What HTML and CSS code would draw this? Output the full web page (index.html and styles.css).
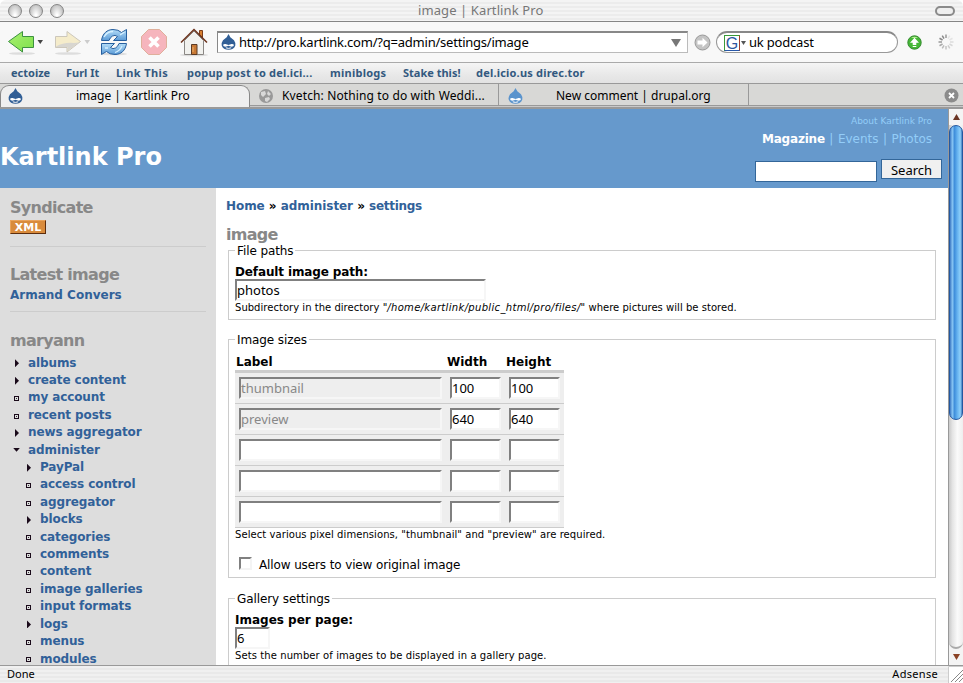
FILE: index.html
```
<!DOCTYPE html>
<html lang="en">
<head>
<meta charset="utf-8">
<title>image | Kartlink Pro</title>
<link rel="stylesheet" href="styles.css">
</head>
<body>
<svg width="0" height="0" class="defs">
  <defs>
    <linearGradient id="gGreen" x1="0" y1="0" x2="1" y2="1"><stop offset="0" stop-color="#a8f070"/><stop offset="1" stop-color="#7fe04c"/></linearGradient>
    <linearGradient id="gBlue" x1="0" y1="0" x2="0" y2="1"><stop offset="0" stop-color="#b4ddf8"/><stop offset="1" stop-color="#5a9ad6"/></linearGradient>
    <symbol id="drop" viewBox="0 0 15 16">
      <path d="M7.500 0L9.300 3.200L13 6.200Q15 9 14.300 11.500Q12.800 15.800 7.500 15.800T.7 11.500Q0 9 2 6.200L5.700 3.200Z" fill="currentColor"/>
      <path d="M2 11Q2.600 9.800 4.500 10L7.500 11L10.500 10Q12.400 9.800 13 11Q12.700 12.800 10.500 12.800L7.500 11.800L4.500 12.800Q2.300 12.800 2 11Z" fill="#fff"/>
      <path d="M4.800 13.800Q7.500 15 10.200 13.800" fill="none" stroke="#fff"/>
    </symbol>
  </defs>
</svg>
<div class="window">
  <header class="titlebar">
    <div class="lights"><i></i><i></i><i></i></div>
    <span class="title">image | Kartlink Pro</span>
    <i class="pill"></i>
  </header>

  <nav class="toolbar">
    <svg class="tools" width="210" height="40" viewBox="0 0 210 40">
      <g fill="#000" opacity=".1"><ellipse cx="22" cy="31.500" rx="13" ry="1.300"/><ellipse cx="68" cy="31.500" rx="13" ry="1.300"/><ellipse cx="114" cy="32" rx="13" ry="1.300"/><ellipse cx="194" cy="33" rx="14" ry="1.300"/></g>
      <path d="M8.500 19.500L22.500 9.500V14.500H33.500V25.500H22.500V30L8.500 19.500Z" fill="url(#gGreen)" stroke="#3c9140"/>
      <path d="M37.500 18h5.500l-2.750 4z" fill="#444"/>
      <path d="M80.500 19.500L67 9.500V14.500H55.500V25.500H67V30Z" fill="#f5eccb" stroke="#ccc7bb"/>
      <path d="M56 24.500Q64 20 74 21L79 20.500L67.500 29V25H56Z" fill="#d8d6d0"/>
      <path d="M84.500 18h5.500l-2.750 4z" fill="#ccc"/>
      <g fill="url(#gBlue)" stroke="#28609f" stroke-linejoin="round">
        <path d="M101.500 18.500C102.500 11.500 107 7.500 113 7.500Q118.500 7.500 121.500 10.500L126.500 7.500V18.500H113.500L117.500 14.500Q115 12.500 112.500 14Q110 15.500 109 18.500Z"/>
        <path d="M126.500 21.500C125.500 28.500 121 32.500 115 32.500Q109.500 32.500 106.500 29.500L101.500 32.500V21.500H114.500L110.500 25.500Q113 27.500 115.500 26Q118 24.500 119 21.500Z"/>
      </g>
      <path d="M104 15Q107 9.500 113 9.500M120 13L124.500 10M105 26h3M122 24Q120 29 115 30.500" fill="none" stroke="#d5f0ff" stroke-width="1.300"/>
      <path d="M148.500 7.500H159.500L166.500 14.500V25.500L159.500 32.500H148.500L141.500 25.500V14.500Z" fill="#f6b5bd" stroke="#dfaf9b"/>
      <path d="M149.500 15.500L158.500 24.500M158.500 15.500L149.500 24.500" stroke="#fff" stroke-width="3.600"/>
      <path d="M199.500 8.500h3V16l-3-3z" fill="#d98032" stroke="#7c3c18"/>
      <path d="M184.500 18.500L194 9L203.500 18.500V32.500H184.500Z" fill="#f1f1ee" stroke="#8a8784"/>
      <path d="M181 20.500L194 7.500L207 20.500" fill="none" stroke="#6c321b" stroke-width="1.500"/>
      <path d="M191.500 22.500h5.500V32.500h-5.500z" fill="#c87935" stroke="#5b3a23"/>
      <path d="M193 30v-5" stroke="#efb36b"/>
    </svg>
    <div class="address">
      <svg width="15" height="16" class="navy"><use href="#drop"/></svg>
      <span class="url">http://pro.kartlink.com/?q=admin/settings/image</span>
      <svg class="drop-arrow" width="10" height="8"><path d="M0 0H10L5 8Z" fill="#777"/></svg>
    </div>
    <svg class="go" width="17" height="17" viewBox="0 0 17 17"><circle cx="8.500" cy="8.500" r="7.500" fill="#c4c4c4" stroke="#999"/><path d="M3.500 6.500H8.500V3.800L13.500 8.500L8.500 13.200V10.500H3.500Z" fill="#fff"/></svg>
    <div class="searchbox">
      <span class="g-icon">G</span>
      <svg width="5" height="4"><path d="M0 0H5L2.500 4Z" fill="#555"/></svg>
      <span class="query">uk podcast</span>
    </div>
    <svg class="up" width="15" height="15" viewBox="0 0 15 15"><circle cx="7.500" cy="7.500" r="6.700" fill="#45b736" stroke="#358a30"/><path d="M4 3Q7.500 .5 11 3Z" fill="#b4ec91"/><path d="M7.500 2.800L12 7.800H9.300V10H5.700V7.800H3ZM5.700 11H9.300V12H5.700Z" fill="#fff"/></svg>
    <svg class="spinner" width="16" height="16" viewBox="-8 -8 16 16" stroke-width="1.500">
      <path d="M0 -4V-7.500" stroke="#999"/><path d="M0 -4V-7.500" stroke="#e4e4e4" transform="rotate(30)"/><path d="M0 -4V-7.500" stroke="#e4e4e4" transform="rotate(60)"/><path d="M0 -4V-7.500" stroke="#ddd" transform="rotate(90)"/><path d="M0 -4V-7.500" stroke="#d8d8d8" transform="rotate(120)"/><path d="M0 -4V-7.500" stroke="#ccc" transform="rotate(150)"/><path d="M0 -4V-7.500" stroke="#c4c4c4" transform="rotate(180)"/><path d="M0 -4V-7.500" stroke="#bbb" transform="rotate(210)"/><path d="M0 -4V-7.500" stroke="#aaa" transform="rotate(240)"/><path d="M0 -4V-7.500" stroke="#999" transform="rotate(270)"/><path d="M0 -4V-7.500" stroke="#888" transform="rotate(300)"/><path d="M0 -4V-7.500" stroke="#888" transform="rotate(330)"/>
    </svg>
  </nav>

  <nav class="bookmarks">
    <a class="bm-1">ectoize</a><a class="bm-2">Furl It</a><a class="bm-3">Link This</a><a class="bm-4">popup post to del.ici...</a><a class="bm-5">miniblogs</a><a class="bm-6">Stake this!</a><a class="bm-7">del.icio.us direc.tor</a>
  </nav>

  <nav class="tabs">
    <div class="tab active"><svg width="15" height="16" class="navy"><use href="#drop"/></svg><span class="tab-1">image | Kartlink Pro</span></div>
    <div class="tab kvetch"><svg width="16" height="16" viewBox="0 0 16 16"><circle cx="8" cy="8" r="7" fill="#999"/><path d="M3 4l4-1 1 3-3 3-2-2zM10 3l3 3-2 2-2-2zM7 10l4-1 1 2-3 3-2-1z" fill="#d8d8d8"/></svg><span class="tab-2">Kvetch: Nothing to do with Weddi...</span></div>
    <div class="tab comment"><svg width="15" height="16" class="sky"><use href="#drop"/></svg><span class="tab-3">New comment | drupal.org</span></div>
    <svg class="tab-close" width="15" height="15" viewBox="0 0 15 15"><circle cx="7.500" cy="7.500" r="7" fill="#8b8b8b"/><path d="M5 5L10 10M10 5L5 10" stroke="#fff" stroke-width="1.800"/></svg>
  </nav>

  <div class="viewport">
    <div class="page">
      <header class="site-head">
        <h1>Kartlink Pro</h1>
        <div class="head-right">
          <a class="about">About Kartlink Pro</a>
          <div class="primary"><b>Magazine</b><span>|</span><a class="events">Events</a><span>|</span><a class="photos">Photos</a></div>
          <div class="site-search"><span class="search-field"></span><span class="search-button">Search</span></div>
        </div>
      </header>
      <div class="columns">
        <aside class="sidebar">
          <section class="block syndicate"><h2>Syndicate</h2><span class="xml">XML</span></section>
          <section class="block latest"><h2>Latest image</h2><a>Armand Convers</a></section>
          <section class="block user">
            <h2>maryann</h2>
            <ul class="menu">
              <li class="closed">albums</li><li class="closed">create content</li><li class="leaf">my account</li><li class="leaf">recent posts</li><li class="closed">news aggregator</li>
              <li class="open">administer</li>
              <li class="sub closed">PayPal</li><li class="sub leaf">access control</li><li class="sub leaf">aggregator</li><li class="sub closed">blocks</li><li class="sub leaf">categories</li><li class="sub leaf">comments</li><li class="sub leaf">content</li><li class="sub leaf">image galleries</li><li class="sub leaf">input formats</li><li class="sub closed">logs</li><li class="sub leaf">menus</li><li class="sub leaf">modules</li>
            </ul>
          </section>
        </aside>
        <main class="content">
          <div class="breadcrumb"><a>Home</a> » <a>administer</a> » <a class="crumb-last">settings</a></div>
          <h2 class="page-title">image</h2>
          <fieldset class="paths">
            <legend>File paths</legend>
            <div class="label">Default image path:</div>
            <div class="field path-field">photos</div>
            <div class="description d-path">Subdirectory in the directory "<em>/home/kartlink/public_html/pro/files/</em>" where pictures will be stored.</div>
          </fieldset>
          <fieldset class="sizes">
            <legend>Image sizes</legend>
            <div class="grid">
              <div class="grid-row grid-head"><span>Label</span><span>Width</span><span>Height</span></div>
              <div class="grid-row"><div class="field off">thumbnail</div><div class="field">100</div><div class="field">100</div></div>
              <div class="grid-row"><div class="field off">preview</div><div class="field">640</div><div class="field">640</div></div>
              <div class="grid-row"><div class="field"></div><div class="field"></div><div class="field"></div></div>
              <div class="grid-row"><div class="field"></div><div class="field"></div><div class="field"></div></div>
              <div class="grid-row"><div class="field"></div><div class="field"></div><div class="field"></div></div>
            </div>
            <div class="description d-select">Select various pixel dimensions, "thumbnail" and "preview" are required.</div>
            <div class="check"><i></i><span>Allow users to view original image</span></div>
          </fieldset>
          <fieldset class="gallery">
            <legend>Gallery settings</legend>
            <div class="label label-count">Images per page:</div>
            <div class="field count-field">6</div>
            <div class="description d-count">Sets the number of images to be displayed in a gallery page.</div>
          </fieldset>
        </main>
      </div>
    </div>
    <div class="scrollbar">
      <div class="arrow"><svg width="7" height="6"><path d="M3.500 0L7 6H0Z" fill="#6b3524"/></svg></div>
      <div class="track"><div class="thumb"></div></div>
      <div class="arrow"><svg width="7" height="6"><path d="M3.500 6L7 0H0Z" fill="#8b4325"/></svg></div>
    </div>
  </div>

  <footer class="status"><span class="done">Done</span><span class="adsense">Adsense</span>
    <svg class="grip" width="15" height="17"><path d="M0 0H15V17H0Z" fill="#fff"/><path d="M.5 17V.5H15" fill="none" stroke="#ccc"/><path d="M3 16L15 4M7 16L15 8M11 16L15 12" stroke="#888"/></svg>
  </footer>
</div>
</body>
</html>
```

FILE: styles.css
```
*, *::before { box-sizing: border-box; }
html, body { margin: 0; height: 683px; overflow: hidden; background: #fff; }
body { font-family: "Noto Sans", sans-serif; font-size: 12px; color: #000; }
h1, h2, ul, fieldset { margin: 0; padding: 0; }
.defs { position: absolute; }
svg { display: block; flex: none; }
.window { display: flex; flex-direction: column; width: 963px; height: 683px; white-space: nowrap; }

.titlebar { display: flex; align-items: center; height: 22px; flex: none; padding: 0 8px 0 8px; border-bottom: 1px solid #858585; background: repeating-linear-gradient(#f4f4f4 0 2px, #ececec 2px 4px); border-radius: 6px 6px 0 0; }
.lights { display: flex; gap: 7px; width: 410px; }
.lights i { width: 14px; height: 14px; border: 1px solid #858585; border-radius: 50%; background: radial-gradient(ellipse at 50% 90%, #fff 10%, #d5d5d5 55%, #a8a8a8 100%); }
.title { padding-bottom: 1px; color: #777; font-size: 13px; line-height: 20px; letter-spacing: .1px; }
.pill { width: 20px; height: 10px; margin-left: auto; border: 2px solid #8a8a8a; border-radius: 5px; background: #eee; }

.toolbar { display: flex; align-items: center; height: 41px; flex: none; border-bottom: 1px solid #aaa; background: #f8f8f8; }
.address { display: flex; align-items: center; width: 471px; height: 22px; margin-left: 7px; padding-left: 3px; border: 1px solid #bbb; border-top: 2px solid #888; border-left: 1px solid #888; background: #fff; }
.navy { color: #315f96; margin-bottom: 2px; }
.sky { color: #5b94cd; }
.url { margin-left: 3px; padding-bottom: 2px; font-size: 13px; line-height: 18px; letter-spacing: -.22px; }
.drop-arrow { margin-left: auto; margin-right: 6px; }
.go { margin-left: 6px; }
.searchbox { display: flex; align-items: center; width: 182px; height: 22px; margin-left: 5px; padding-left: 7px; border: 1px solid #999; border-top: 2px solid #888; border-radius: 11px; background: #fff; }
.g-icon { width: 16px; height: 16px; margin-right: 1px; border: 1px solid #3b9a37; border-right-color: #a04030; border-bottom-color: #2858a8; color: #2b57a0; font: 16px/15px "Liberation Sans", sans-serif; text-align: center; }
.query { margin-left: 3px; padding-bottom: 2px; font-size: 13px; line-height: 18px; letter-spacing: -.2px; }
.up { margin-left: 9px; }
.spinner { margin-left: 16px; }

.bookmarks { display: flex; align-items: center; height: 21px; flex: none; padding: 0 0 2px 11px; border-bottom: 1px solid #999; background: linear-gradient(#f5f5f5, #e8e8e8 60%, #e2e2e2); font-size: 11px; font-weight: bold; color: #33597f; }
.bm-1 { width: 55px; } .bm-2 { width: 50px; } .bm-3 { width: 71px; letter-spacing: .4px; } .bm-4 { width: 143px; letter-spacing: .2px; } .bm-5 { width: 73px; letter-spacing: .25px; } .bm-6 { width: 73px; } .bm-7 { letter-spacing: .2px; }

.tabs { display: flex; height: 25px; flex: none; background: #d8d8d6; border-bottom: 2px solid #999; box-shadow: inset 0 -1px #c9c9c9, inset 0 -2px #999; }
.tab { display: flex; align-items: center; height: 22px; padding: 2px 0 0 8px; font-size: 12px; border-right: 1px solid #999; }
.tab.active { width: 250px; height: 22px; margin-top: 1px; padding: 0 0 1px 7px; border: 1px solid #888; border-bottom: 0; border-radius: 9px 9px 0 0; background: #efefef; }
.active svg { margin-bottom: 0; }
.kvetch { width: 249px; }
.comment { width: 250px; padding-left: 9px; }
.tab-1 { margin-left: 53px; padding-bottom: 1px; }
.tab-2 { margin-left: 8px; padding-bottom: 2px; letter-spacing: .13px; }
.tab-3 { margin-left: 33px; padding-bottom: 2px; }
.tab-close { margin: 4px 4px 0 auto; }

.viewport { display: flex; height: 556px; flex: none; overflow: hidden; }
.page { width: 948px; overflow: hidden; font-family: "DejaVu Sans", sans-serif; font-size: 12px; }
.site-head { display: flex; justify-content: space-between; height: 79px; background: #69c; color: #fff; }
.site-head h1 { margin-top: 33px; font-size: 24px; line-height: 30px; }
.head-right { display: flex; flex-direction: column; align-items: flex-end; padding: 6px 6px 0 0; color: #93cdf8; }
.about { margin-right: 10px; font-size: 9px; line-height: 12px; }
.primary { display: flex; margin: 4px 10px 0 0; line-height: 16px; }
.primary b { color: #fff; letter-spacing: -.2px; }
.primary span { width: 13px; text-align: center; }
.site-search { display: flex; gap: 4px; margin-top: 12px; font: 13px/20px "Noto Sans", sans-serif; color: #000; }
.search-field { width: 122px; height: 21px; margin-top: 2px; border: 1px solid #369; background: #fff; }
.search-button { width: 61px; height: 20px; border: 1px solid #369; background: #f0f0f0; text-align: center; }

.columns { display: flex; }
.sidebar { width: 216px; height: 477px; overflow: hidden; padding: 10px 10px 0; background: #ddd; color: #316199; font-weight: bold; }
.sidebar h2, .page-title { color: #888; font-size: 16px; line-height: 20px; letter-spacing: -.7px; }
.block { border-bottom: 1px solid #ccc; }
.syndicate { height: 49px; }
.xml { display: block; width: 36px; height: 14px; margin-top: 2px; border: 1px solid #e9a35c; border-right-color: #5d2d0d; border-bottom-color: #5d2d0d; background: #d98b3c; color: #fff; font: bold 11px/13px "DejaVu Sans", sans-serif; text-align: center; }
.latest { height: 65px; padding-top: 18px; line-height: 20px; }
.user { padding-top: 19px; border: 0; }
.menu { margin-top: 3.6px; list-style: none; line-height: 17.4px; letter-spacing: -.1px; }
.menu li { display: flex; align-items: center; }
.menu li::before { content: ""; flex: none; width: 5px; height: 5px; margin: 1px 9px 0 4px; border: 1px solid #1a0a1a; background: #ddd; }
.menu li.leaf::before { background: radial-gradient(circle, #333 0.7px, #ddd 0.8px); }
.menu li.closed::before { width: 4px; height: 8px; margin: 0 9px 0 5px; border: 0; background: #1a0a1a; clip-path: polygon(0 0, 100% 50%, 0 100%); }
.menu li.open::before { width: 7px; height: 4px; margin: 0 8px 1px 3px; border: 0; background: #1a0a1a; clip-path: polygon(0 0, 100% 0, 50% 100%); }
.menu li.sub { padding-left: 12px; }

.content { width: 732px; padding: 10px 12px 0 10px; }
.breadcrumb { line-height: 16px; font-weight: bold; }
.breadcrumb a { color: #316199; letter-spacing: -.07px; }
.breadcrumb .crumb-last { letter-spacing: -.3px; }
.page-title { margin-top: 11px; }
fieldset { width: 708px; margin: 0 0 0 2px; border: 1px solid #ccc; padding: 0 6px; min-width: 0; }
legend { padding: 0 2px; height: 15px; line-height: 17px; letter-spacing: -.1px; }
.paths { height: 77px; margin-top: -2px; }
.sizes { height: 246px; margin-top: 12px; }
.gallery { height: 120px; margin-top: 13px; }
.label { margin-top: 6px; height: 15px; line-height: 17px; font-weight: bold; letter-spacing: -.13px; }
.label-count { letter-spacing: 0; }
.field { height: 22px; border: 2px solid #f6f6f6; border-top-color: #808080; border-left-color: #808080; background: #fff; font: 13px/19px "Noto Sans", sans-serif; }
.path-field { width: 251px; }
.count-field { width: 35px; }
.description { font-size: 10px; line-height: 14px; }
.d-path em { letter-spacing: .33px; }
.d-path { letter-spacing: .03px; }
.d-select { letter-spacing: .07px; }
.d-count { letter-spacing: .09px; }
.grid { width: 329px; }
.grid-row { display: grid; grid-template-columns: 203px 51px 51px; gap: 8px; height: 31px; padding: 4px; border-bottom: 1px solid #ccc; background: #eee; }
.grid-head { height: 26px; padding: 8px 0 0 1px; border-bottom: 3px solid #ccc; background: #fff; font-weight: bold; line-height: 14px; }
.off { background: #eee; color: #888; }
.check { display: flex; align-items: flex-start; margin: 15px 0 0 4px; }
.check i { width: 13px; height: 13px; border: 2px solid #f4f4f4; border-top-color: #808080; border-left-color: #808080; }
.check span { margin-left: 7px; line-height: 17px; letter-spacing: -.12px; }

.scrollbar { display: flex; flex-direction: column; width: 15px; border-left: 1px solid #999; background: #f4f4f4; }
.arrow { display: flex; align-items: center; justify-content: center; height: 16px; flex: none; }
.track { flex: 1; background: linear-gradient(90deg, #c9c9c9, #e4e4e4 25%, #fafafa 60%, #eee); border-radius: 0 0 8px 8px; border-bottom: 2px solid #aaa; }
.thumb { height: 295px; border: 1px solid #2458a0; border-radius: 7px; background: linear-gradient(90deg, #3c78c4, #86c3f2 20%, #3f8edb 38%, #64b1ef 60%, #8fd0fa 85%, #4580c0); }

.status { display: flex; align-items: center; height: 18px; flex: none; padding-left: 7px; border-top: 1px solid #999; background: repeating-linear-gradient(#f0f0f0 0 2px, #e9e9e9 2px 4px); font-size: 11px; line-height: 16px; }
.done, .adsense { padding-bottom: 2px; }
.adsense { margin-left: auto; letter-spacing: .3px; }
.grip { margin-left: 10px; }
```
